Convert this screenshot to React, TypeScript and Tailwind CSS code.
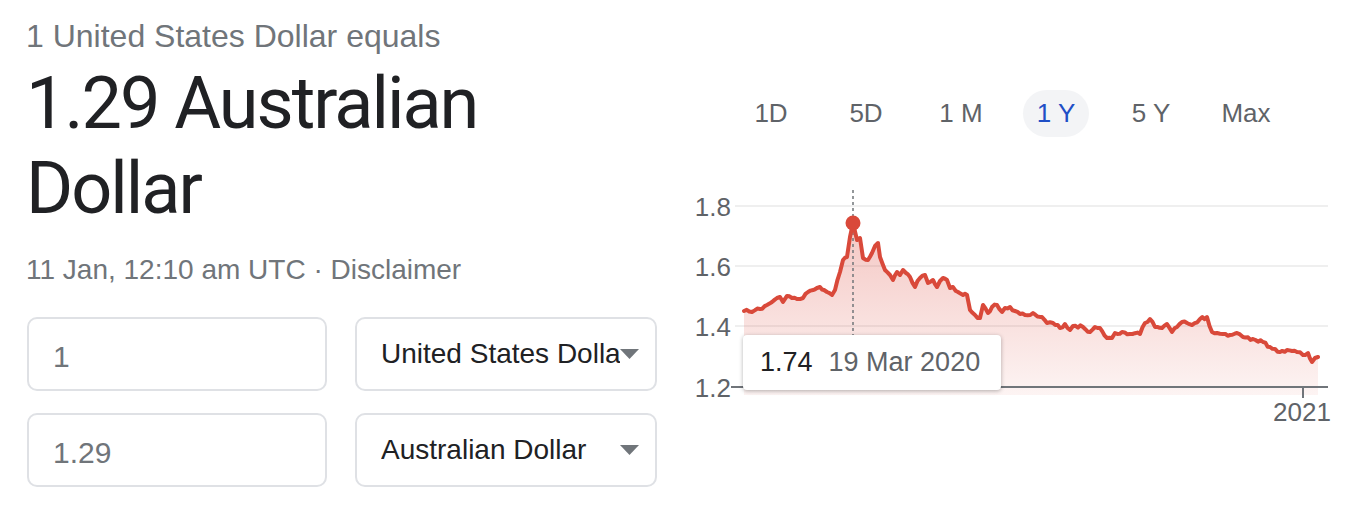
import React from "react";

const ranges = ["1D", "5D", "1 M", "1 Y", "5 Y", "Max"];

// traced from the 1 year chart, x in page px, y in page px
const trace: [number, number][] = [
  [744, 311], [752, 312], [760, 309], [767, 305], [772, 302], [777, 298], [780, 297], [783, 302],
  [787, 296], [792, 298], [797, 299], [803, 298], [808, 292], [813, 290], [817, 288], [820, 287],
  [824, 290], [827, 292], [832, 295], [835, 290], [840, 272], [843, 260], [847, 257], [850, 237],
  [853, 223], [857, 240], [860, 238], [863, 258], [868, 260], [872, 253], [875, 246], [878, 243],
  [880, 257], [885, 270], [890, 275], [893, 280], [897, 272], [900, 275], [903, 270], [906, 273],
  [910, 277], [915, 287], [920, 278], [925, 275], [928, 283], [933, 280], [937, 287], [943, 278],
  [947, 280], [950, 288], [953, 287], [958, 292], [963, 295], [967, 295], [970, 310], [975, 315],
  [980, 318], [983, 305], [988, 313], [992, 307], [997, 305], [1002, 312], [1005, 308], [1010, 307],
  [1015, 311], [1020, 314], [1025, 315], [1033, 313], [1042, 317], [1047, 323], [1053, 323],
  [1060, 328], [1065, 324], [1070, 330], [1073, 326], [1083, 327], [1090, 332], [1095, 327],
  [1100, 328], [1107, 338], [1112, 338], [1115, 333], [1122, 332], [1130, 334], [1140, 334],
  [1145, 323], [1150, 319], [1155, 327], [1162, 328], [1167, 324], [1172, 332], [1177, 327],
  [1182, 322], [1187, 323], [1192, 325], [1200, 319], [1207, 317], [1212, 332], [1217, 333],
  [1223, 334], [1230, 335], [1237, 333], [1243, 337], [1253, 339], [1263, 342], [1270, 347],
  [1280, 352], [1287, 350], [1297, 352], [1303, 355], [1308, 353], [1312, 362], [1315, 358],
  [1318, 357],
];

function buildPoints() {
  let seed = 11;
  const rnd = () => {
    seed = (seed * 16807) % 2147483647;
    return seed / 2147483647;
  };
  const pts: [number, number][] = [];
  for (let i = 0; i < trace.length - 1; i++) {
    const [x0, y0] = trace[i];
    const [x1, y1] = trace[i + 1];
    const steps = Math.max(1, Math.round((x1 - x0) / 2.5));
    for (let s = 0; s < steps; s++) {
      const t = s / steps;
      const x = x0 + (x1 - x0) * t;
      let y = y0 + (y1 - y0) * t;
      if (s > 0 && Math.abs(x - 853) > 3) y += (rnd() - 0.5) * 3;
      pts.push([x, y]);
    }
  }
  pts.push(trace[trace.length - 1]);
  return pts;
}

const points = buildPoints();
const linePath = points.map(([x, y], i) => `${i ? "L" : "M"}${x.toFixed(1)} ${y.toFixed(1)}`).join(" ");
const areaPath = `${linePath} L1318 395 L744 395 Z`;

function Chart() {
  const grid = [
    { y: 206, label: "1.8" },
    { y: 266, label: "1.6" },
    { y: 326, label: "1.4" },
  ];
  return (
    <svg width={668} height={250} viewBox="680 180 668 250" className="block">
      <defs>
        <linearGradient id="fill" x1="0" y1="223" x2="0" y2="395" gradientUnits="userSpaceOnUse">
          <stop offset="0" stopColor="#db4437" stopOpacity="0.3" />
          <stop offset="1" stopColor="#db4437" stopOpacity="0.06" />
        </linearGradient>
      </defs>
      {grid.map((g) => (
        <g key={g.label}>
          <line x1={735} x2={1328} y1={g.y} y2={g.y} stroke="#efefef" strokeWidth={2} />
          <text x={731} y={g.y + 10} textAnchor="end" fontSize={26} fill="#5f6368">
            {g.label}
          </text>
        </g>
      ))}
      <text x={731} y={397} textAnchor="end" fontSize={26} fill="#5f6368">
        1.2
      </text>
      <path d={areaPath} fill="url(#fill)" />
      <line x1={853} x2={853} y1={190} y2={387} stroke="#70757a" strokeWidth={1.5} strokeDasharray="3 3" />
      <path d={linePath} fill="none" stroke="#d9493a" strokeWidth={4} strokeLinejoin="round" strokeLinecap="round" />
      <circle cx={853} cy={223} r={7.5} fill="#d9493a" />
      <line x1={731} x2={1328} y1={387} y2={387} stroke="#70757a" strokeWidth={2} />
      <line x1={1303} x2={1303} y1={387} y2={398} stroke="#70757a" strokeWidth={2} />
      <text x={1302} y={421} textAnchor="middle" fontSize={26} fill="#5f6368">
        2021
      </text>
    </svg>
  );
}

function Select({ label }: { label: string }) {
  return (
    <div className="h-[74px] border-2 border-[#dfe1e5] rounded-[10px] flex items-center pl-[24px] pr-[16px]">
      <div className="flex-1 overflow-hidden whitespace-nowrap text-[28px] text-[#202124]">{label}</div>
      <svg width={19} height={10} viewBox="0 0 19 10" className="shrink-0">
        <path d="M0 0 H19 L9.5 10 Z" fill="#70757a" />
      </svg>
    </div>
  );
}

function AmountBox({ value }: { value: string }) {
  return (
    <div className="h-[74px] border-2 border-[#dfe1e5] rounded-[10px] flex items-center pl-[24px] pt-[5px] text-[30px] text-[#70757a]">
      {value}
    </div>
  );
}

export default function App() {
  return (
    <div className="flex w-[1348px] h-[508px] bg-white overflow-hidden font-['Liberation_Sans',Arial,sans-serif]">
      <div className="w-[680px] shrink-0 pl-[26px] pt-[18px]">
        <div className="text-[32px] leading-[36px] text-[#70757a] whitespace-nowrap">1 United States Dollar equals</div>
        <div className="mt-[7px] w-[600px] text-[72px] leading-[85px] tracking-[-2px] text-[#202124] font-['Roboto',sans-serif]">
          1.29 Australian Dollar
        </div>
        <div className="mt-[21px] text-[28px] leading-[36px] text-[#70757a] whitespace-nowrap">
          11 Jan, 12:10 am UTC · Disclaimer
        </div>
        <div className="mt-[29px] ml-[1px] grid grid-cols-[300px_302px] gap-x-[28px] gap-y-[22px]">
          <AmountBox value="1" />
          <Select label="United States Dollar" />
          <AmountBox value="1.29" />
          <Select label="Australian Dollar" />
        </div>
      </div>
      <div className="relative w-[668px] shrink-0">
        <div className="mt-[90px] flex pl-[43.5px]">
          {ranges.map((r) => (
            <div key={r} className="w-[95px] flex justify-center">
              <div
                className={
                  r === "1 Y"
                    ? "h-[47px] px-[14px] rounded-full flex items-center text-[26px] bg-[#f3f4f6] text-[#1f4fc6]"
                    : "h-[47px] px-[14px] rounded-full flex items-center text-[26px] text-[#5f6368]"
                }
              >
                {r}
              </div>
            </div>
          ))}
        </div>
        <div className="mt-[43px]">
          <Chart />
        </div>
        <div className="absolute left-[63px] top-[335px] w-[258px] h-[55px] bg-white rounded-[4px] shadow-[0_1px_4px_rgba(0,0,0,0.3)] flex items-center pl-[17px] text-[27px] whitespace-nowrap">
          <span className="text-[#202124]">1.74</span>
          <span className="ml-[16px] text-[#5f6368]">19 Mar 2020</span>
        </div>
      </div>
    </div>
  );
}
